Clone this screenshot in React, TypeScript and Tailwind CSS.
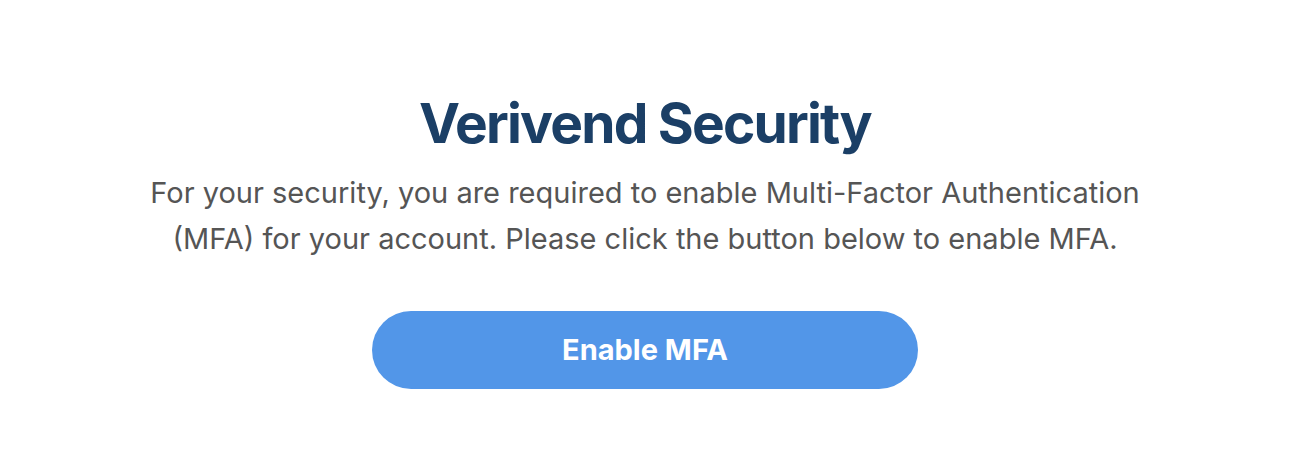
import React from "react";

export default function App() {
  return (
    <div className="w-[1290px] h-[456px] bg-white flex flex-col items-center pt-[90px] font-['Inter',sans-serif]">
      <h1 className="text-[55px] leading-[66px] font-bold text-[#1b3f66] tracking-[-1.8px]">
        Verivend Security
      </h1>
      <p className="mt-[14px] text-[29px] leading-[46px] text-[#555555] text-center max-w-[1000px]">
        For your security, you are required to enable Multi-Factor Authentication (MFA) for your account. Please click the button below to enable MFA.
      </p>
      <button className="mt-[49px] w-[546px] h-[78px] rounded-full bg-[#5296e8] text-white text-[29px] font-bold">
        Enable MFA
      </button>
    </div>
  );
}
